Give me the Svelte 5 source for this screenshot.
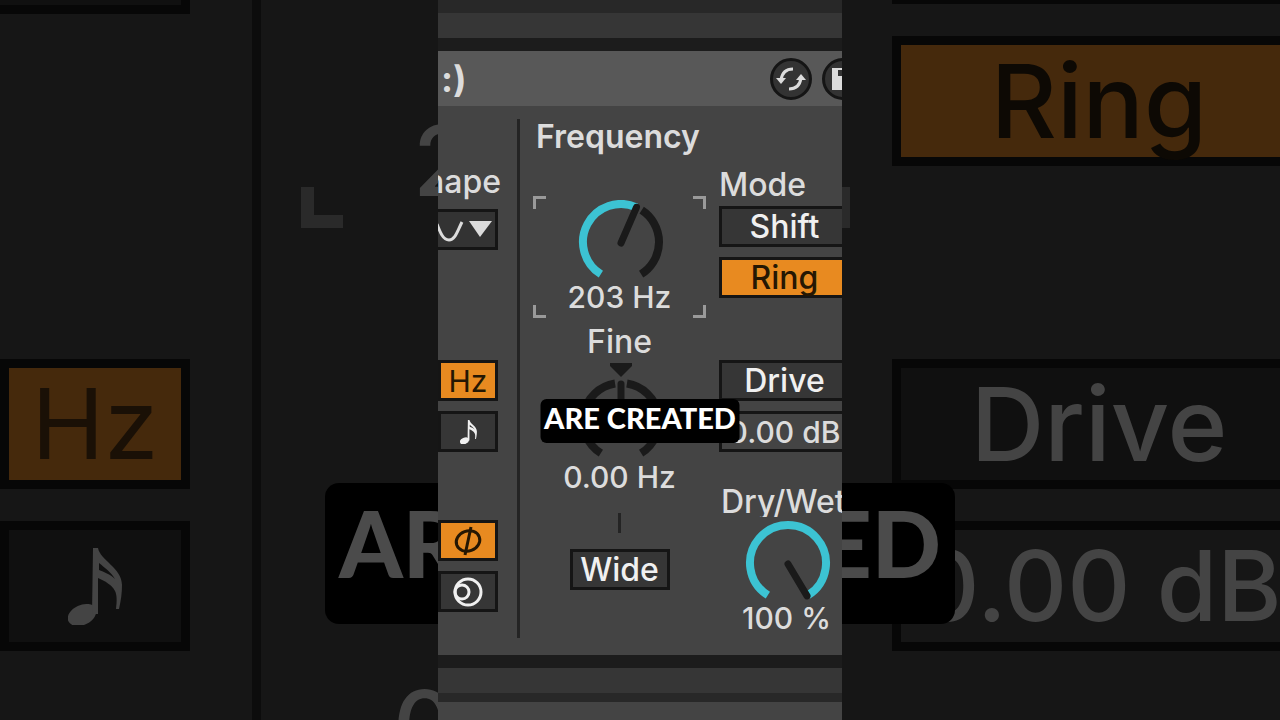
<script>
    let mode = $state('Ring')
    let unit = $state('Hz')
    let phase = $state('phase')
    let drive = $state(false)
    let wide = $state(false)
    let driveAmount = $state('0.00 dB')
    let shape = $state('sine')

    const SWEEP = 148

    // angle is measured clockwise from 12 o'clock
    function point(cx, cy, r, angle) {
        const a = (angle * Math.PI) / 180
        return `${(cx + r * Math.sin(a)).toFixed(2)} ${(cy - r * Math.cos(a)).toFixed(2)}`
    }

    function arc(cx, cy, r, from, to) {
        const large = to - from > 180 ? 1 : 0
        return `M${point(cx, cy, r, from)} A${r} ${r} 0 ${large} 1 ${point(cx, cy, r, to)}`
    }
</script>

{#snippet note()}
    <svg class="note" viewBox="0 0 54 77" aria-hidden="true">
        <ellipse cx="14" cy="67" rx="15" ry="10" transform="rotate(-25 14 67)" />
        <path d="M25 0h5c2 12 24 20 24 37 0 8-1 15-3 24h-3c1-8 1-14-1-18-3-6-10-10-17-13v36h-6z" />
        <path class="cut" d="M31 15c6 5 12 9 16 16-5-5-11-7-16-9z" />
    </svg>
{/snippet}

{#snippet knob(label, angle, filled)}
    <svg class="knob" viewBox="0 0 90 79" role="img" aria-label={label}>
        {#if filled < SWEEP}
            <path class="track" d={arc(46, 42, 38, filled + 9, SWEEP)} />
        {/if}
        <path class="fill" d={arc(46, 42, 38, -SWEEP, filled)} />
        <path class="needle" d={`M46 43 L${point(46, 42, 38, angle)}`} />
    </svg>
{/snippet}

<main class="stage">
    <div class="backdrop" aria-hidden="true">
        <div class="big-buttons left">
            <div class="big-box cut-top"></div>
            <div class="big-box on">Hz</div>
            <div class="big-box">{@render note()}</div>
        </div>
        <div class="big-values">
            <div class="big-row">
                <span class="big-corner"></span>
                <span class="big-digit">2</span>
            </div>
            <div class="big-digit zero">0</div>
        </div>
    </div>

    <section class="window">
        <div class="band dark"></div>
        <div class="band mid"></div>
        <div class="band black"></div>
        <div class="device">
            <header>
                <h1>:)</h1>
                <div class="tools">
                    <button class="round" aria-label="Hot-swap">
                        <svg viewBox="0 0 42 42">
                            <path class="stroke" d="M23 11c-7 0-11 4-12 11" />
                            <path class="solid" d="M6 20h10l-5 6z" />
                            <path class="stroke" d="M19 31c7 0 11-4 12-11" />
                            <path class="solid" d="M26 22h10l-5-6z" />
                        </svg>
                    </button>
                    <button class="round" aria-label="Save preset">
                        <svg viewBox="0 0 42 42">
                            <path class="solid" d="M10 10h19l4 4v18H10z" />
                            <path class="slot" d="M16 12h11v6H16z" />
                        </svg>
                    </button>
                </div>
            </header>

            <div class="body">
                <div class="col shape-col">
                    <label for="shape">Shape</label>
                    <div class="picker">
                        <svg viewBox="0 0 60 35" aria-hidden="true">
                            <path class="wave" d="M-1 12c3 8 6 16 12 16s8-8 13-18" />
                            <path class="solid" d="M31 9h23L42 25z" />
                        </svg>
                        <select id="shape" bind:value={shape}>
                            <option value="sine">~</option>
                        </select>
                    </div>
                    <div class="pair unit">
                        <button class="box" class:on={unit === 'Hz'} onclick={() => (unit = 'Hz')}>Hz</button>
                        <button class="box" class:on={unit === 'sync'} aria-label="Sync" onclick={() => (unit = 'sync')}>
                            {@render note()}
                        </button>
                    </div>
                    <div class="pair phase">
                        <button class="box" class:on={phase === 'phase'} aria-label="Phase" onclick={() => (phase = 'phase')}>
                            <svg class="glyph" viewBox="0 0 30 30">
                                <ellipse cx="15" cy="15" rx="12" ry="10" transform="rotate(-20 15 15)" />
                                <path d="M18 1L12 29" />
                            </svg>
                        </button>
                        <button class="box" class:on={phase === 'spin'} aria-label="Spin" onclick={() => (phase = 'spin')}>
                            <svg class="glyph" viewBox="0 0 30 30">
                                <circle cx="15" cy="15" r="13" />
                                <circle cx="9" cy="15" r="7" />
                            </svg>
                        </button>
                    </div>
                </div>

                <div class="col freq-col">
                    <h2>Frequency</h2>
                    <div class="focus">
                        <i class="corner tl"></i>
                        <i class="corner tr"></i>
                        <i class="corner bl"></i>
                        <i class="corner br"></i>
                        {@render knob('Frequency', 24, 24)}
                        <span class="value">203 Hz</span>
                    </div>
                    <span class="name">Fine</span>
                    <svg class="fine" viewBox="0 0 90 133" role="img" aria-label="Fine">
                        <path class="marker" d="M35 3h22v3L46 17 35 6z" />
                        <path class="track" d={arc(46, 61, 38, -SWEEP, -9)} />
                        <path class="track" d={arc(46, 61, 38, 9, SWEEP)} />
                        <path class="needle" d="M46 61V24" />
                    </svg>
                    <span class="value">0.00 Hz</span>
                    <span class="tick"></span>
                    <button class="box wide" class:on={wide} onclick={() => (wide = !wide)}>Wide</button>
                </div>

                <div class="col mode-col">
                    <span class="name">Mode</span>
                    <div class="pair">
                        <button class="box" class:on={mode === 'Shift'} onclick={() => (mode = 'Shift')}>Shift</button>
                        <button class="box" class:on={mode === 'Ring'} onclick={() => (mode = 'Ring')}>Ring</button>
                    </div>
                    <div class="pair drive">
                        <button class="box" class:on={drive} onclick={() => (drive = !drive)}>Drive</button>
                        <input class="box field" aria-label="Drive amount" bind:value={driveAmount} />
                    </div>
                    <span class="name wet">Dry/Wet</span>
                    <div class="dial">
                        {@render knob('Dry/Wet', 150, SWEEP)}
                        <span class="value">100 %</span>
                    </div>
                </div>
            </div>
        </div>
        <div class="band black"></div>
        <div class="band mid"></div>
        <div class="band low"></div>
    </section>

    <div class="backdrop" aria-hidden="true">
        <span class="big-edge"></span>
        <div class="big-buttons right">
            <div class="big-box cut-line"></div>
            <div class="big-box on">Ring</div>
            <div class="big-box gap">Drive</div>
            <div class="big-box flat">0.00 dB</div>
        </div>
    </div>

    <p class="caption large" aria-hidden="true">ARE CREATED</p>
    <p class="caption">ARE CREATED</p>
</main>

<style>
    :global(body) {
        margin: 0;
        background: #161616;
    }
    .stage {
        position: relative;
        display: grid;
        grid-template-columns: 1fr 404px 1fr;
        height: 100vh;
        overflow: hidden;
        font-family: Inter, 'Liberation Sans', sans-serif;
        font-size: 32px;
        font-weight: 500;
        line-height: 36px;
        color: #dcdcdc;
    }
    h1, h2, p {
        margin: 0;
        font-size: inherit;
        line-height: inherit;
    }
    button, input, select {
        font: inherit;
        color: inherit;
        margin: 0;
        padding: 0;
    }
    svg {
        display: block;
    }

    /* backdrop */
    .backdrop {
        display: flex;
        overflow: hidden;
        background: #161616;
        color: #444;
        font-size: 98px;
        line-height: 100px;
    }
    .big-buttons {
        display: flex;
        flex-direction: column;
        flex: none;
        gap: 32px;
    }
    .big-buttons.left {
        width: 190px;
        padding-right: 62px;
        border-right: 9px solid #0c0c0c;
    }
    .big-buttons.right {
        width: 414px;
        margin-left: 42px;
        font-size: 102px;
    }
    .big-box {
        box-sizing: border-box;
        display: flex;
        flex: none;
        align-items: center;
        justify-content: center;
        height: 130px;
        border: 9px solid #070707;
        background: #101010;
        white-space: nowrap;
    }
    .big-box.on {
        background: #45290c;
        color: #0d0904;
    }
    .left .on {
        font-weight: 400;
        color: #1a1006;
    }
    .big-box.flat {
        background: #161616;
        font-size: 98px;
    }
    .cut-top {
        height: 14px;
        margin-bottom: 313px;
        border-top: 0;
        border-left: 0;
    }
    .cut-line {
        height: 4px;
        border-width: 0 0 4px;
    }
    .big-box.gap {
        margin-top: 161px;
    }
    .big-values {
        padding: 111px 0 0 40px;
    }
    .big-row {
        display: flex;
        gap: 70px;
    }
    .big-corner {
        box-sizing: border-box;
        width: 42px;
        height: 41px;
        margin-top: 76px;
        border-left: 13px solid #2a2a2a;
        border-bottom: 13px solid #2a2a2a;
    }
    .zero {
        margin: 448px 0 0 92px;
    }
    .big-edge {
        flex: none;
        width: 8px;
        height: 41px;
        margin-top: 187px;
        background: #2a2a2a;
    }
    .note {
        width: 54px;
        height: 77px;
        fill: currentColor;
    }
    .note .cut {
        fill: #101010;
    }

    /* window */
    .window {
        z-index: 1;
        display: flex;
        flex-direction: column;
        overflow: hidden;
        background: #444;
    }
    .band {
        flex: none;
        height: 13px;
    }
    .dark {
        background: #282828;
    }
    .mid {
        height: 25px;
        background: #363636;
    }
    .black {
        background: #1c1c1c;
    }
    .low {
        height: 9px;
        background: #282828;
    }
    .device {
        width: calc(100% + 22px);
    }
    header {
        display: flex;
        align-items: center;
        justify-content: space-between;
        height: 55px;
        padding-left: 3px;
        background: #585858;
    }
    h1 {
        font-size: 36px;
        font-weight: 700;
    }
    .tools {
        display: flex;
        gap: 10px;
    }
    .round {
        width: 42px;
        height: 42px;
        border: 3px solid #151515;
        border-radius: 50%;
        background: #333;
    }
    .round svg {
        width: 42px;
        height: 42px;
        margin: -3px;
    }
    .stroke {
        fill: none;
        stroke: #dcdcdc;
        stroke-width: 3;
    }
    .solid {
        fill: #dcdcdc;
    }
    .slot {
        fill: #333;
    }
    .body {
        display: grid;
        grid-template-columns: 82px 199px 1fr;
        padding: 13px 0 17px;
    }
    .col {
        display: flex;
        flex-direction: column;
        box-sizing: border-box;
        height: 519px;
    }
    .pair {
        display: flex;
        flex-direction: column;
        gap: 10px;
    }
    .box {
        display: flex;
        align-items: center;
        justify-content: center;
        box-sizing: border-box;
        height: 41px;
        border: 3px solid #151515;
        border-radius: 0;
        background: #363636;
        color: #f0f0f0;
    }
    .box.on {
        background: #e88a20;
        color: #251703;
    }

    .shape-col {
        align-items: flex-end;
        padding: 45px 16px 0 0;
        border-right: 3px solid #242424;
    }
    .shape-col .box, .picker {
        width: 60px;
        margin-right: 3px;
    }
    .shape-col .box {
        font-size: 30px;
        font-weight: 400;
    }
    .picker {
        position: relative;
        box-sizing: border-box;
        height: 41px;
        margin-top: 9px;
        border: 3px solid #151515;
        border-left: 0;
        background: #333;
    }
    .picker svg {
        width: 60px;
        height: 35px;
    }
    .picker select {
        position: absolute;
        inset: 0;
        width: 100%;
        opacity: 0;
    }
    .wave {
        fill: none;
        stroke: #dcdcdc;
        stroke-width: 3;
    }
    .unit {
        margin-top: 110px;
    }
    .phase {
        margin-top: 68px;
    }
    .box .note {
        width: 17px;
        height: 24px;
    }
    .box .note .cut {
        fill: #363636;
    }
    .glyph {
        width: 30px;
        height: 30px;
        fill: none;
        stroke: currentColor;
        stroke-width: 3;
    }

    .freq-col {
        align-items: center;
    }
    h2 {
        align-self: flex-start;
        padding-left: 16px;
        font-weight: 600;
    }
    .focus {
        position: relative;
        display: flex;
        flex-direction: column;
        align-items: center;
        box-sizing: border-box;
        width: 173px;
        margin: 41px 0 6px;
        padding: 4px 0 3px;
    }
    .corner {
        position: absolute;
        width: 10px;
        height: 10px;
        border: 0 solid #9a9a9a;
    }
    .tl {
        top: 0;
        left: 0;
        border-width: 3px 0 0 3px;
    }
    .tr {
        top: 0;
        right: 0;
        border-width: 3px 3px 0 0;
    }
    .bl {
        bottom: 0;
        left: 0;
        border-width: 0 0 3px 3px;
    }
    .br {
        bottom: 0;
        right: 0;
        border-width: 0 3px 3px 0;
    }
    .knob {
        width: 90px;
        height: 79px;
    }
    .fine {
        width: 90px;
        height: 133px;
        margin-bottom: -34px;
    }
    .knob path, .fine path {
        fill: none;
        stroke-width: 8;
    }
    .knob .fill {
        stroke: #3cc3d3;
    }
    .knob .track, .fine .track {
        stroke: #1a1a1a;
    }
    .knob .needle, .fine .needle {
        stroke: #1a1a1a;
        stroke-width: 7;
        stroke-linecap: round;
    }
    .fine .marker {
        fill: #1a1a1a;
        stroke: none;
    }
    .value {
        font-size: 30px;
    }
    .tick {
        width: 3px;
        height: 20px;
        margin: 18px 0 16px;
        background: #242424;
    }
    .wide {
        width: 100px;
    }

    .mode-col {
        width: 131px;
        padding-top: 48px;
    }
    .mode-col .name {
        margin-bottom: 3px;
    }
    .drive {
        margin-top: 62px;
    }
    .field {
        width: 100%;
        background: #444;
        color: #dcdcdc;
        font-size: 30px;
        text-align: center;
    }
    .mode-col .wet {
        height: 33px;
        margin: 32px 0 4px;
        padding-left: 2px;
        overflow: hidden;
    }
    .dial {
        display: flex;
        flex-direction: column;
        align-items: center;
        padding-left: 4px;
    }

    .caption {
        position: absolute;
        z-index: 2;
        top: 399px;
        left: 50%;
        box-sizing: border-box;
        width: 199px;
        height: 44px;
        border-radius: 6px;
        background: #000;
        color: #fff;
        font: 900 29px/38px 'Lato Black', Lato, sans-serif;
        text-align: center;
        white-space: nowrap;
        transform: translateX(-50%);
    }
    .caption.large {
        z-index: 0;
        top: 483px;
        width: 630px;
        height: 141px;
        border-radius: 14px;
        color: #4b4b4b;
        font-size: 91px;
        line-height: 120px;
    }
</style>
